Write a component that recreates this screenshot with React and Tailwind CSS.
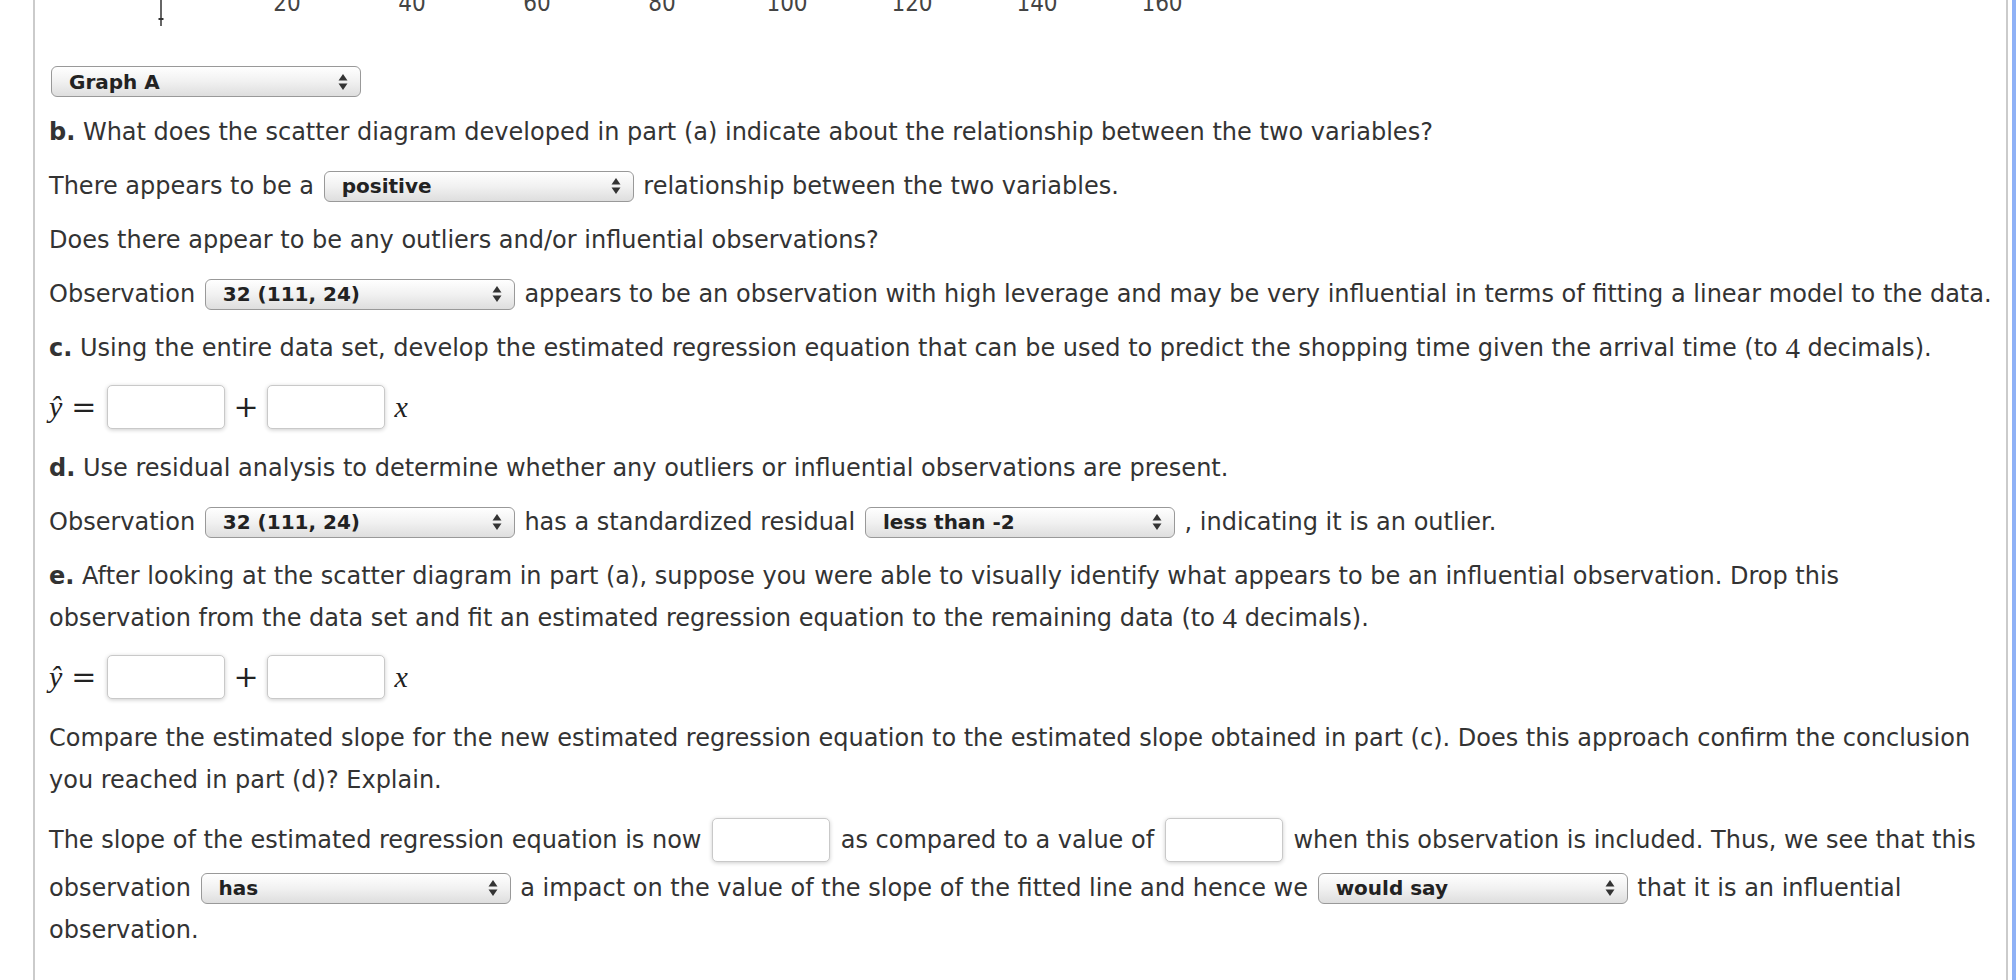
import React from "react";

const Arrows = () => (
  <svg width="10" height="18" viewBox="0 0 10 18" className="shrink-0">
    <path d="M5 1 L9.5 7.5 L0.5 7.5 Z" fill="#333" />
    <path d="M0.5 10.5 L9.5 10.5 L5 17 Z" fill="#333" />
  </svg>
);

const Select = ({ label, className = "" }) => (
  <span
    className={`inline-flex items-center justify-between w-[310px] h-[31px] mx-[2px] pl-[17px] pr-[12px] rounded-[6px] border border-[#999] bg-gradient-to-b from-white via-[#f1f1f1] to-[#dedede] text-[20px] font-bold text-[#222] leading-none ${className}`}
  >
    <span>{label}</span>
    <Arrows />
  </span>
);

const Box = ({ className = "mx-[3px]" }) => (
  <span className={`inline-block w-[118px] h-[44px] rounded-[5px] border border-[#c9c9c9] bg-white shadow-[0_1px_4px_rgba(0,0,0,0.2)] ${className}`} />
);

const Row = ({ children, tall }) => (
  <div className={`flex items-center whitespace-pre ${tall ? "h-[54px]" : "h-[42px]"}`}>
    {children}
  </div>
);

const Four = () => <span className="font-['Liberation_Serif',serif] text-[29px] leading-none">4</span>;

const Equation = () => (
  <div className="flex items-center h-[52px] mb-[2px] text-[#222]">
    <span className="font-['Liberation_Serif',serif] italic text-[30px] leading-none">ŷ</span>
    <span className="ml-[9px] font-['DejaVu_Serif',serif] font-light text-[30px] leading-none">=</span>
    <Box className="ml-[11px]" />
    <span className="ml-[8px] font-['DejaVu_Serif',serif] font-light text-[30px] leading-none">+</span>
    <Box className="ml-[8px]" />
    <span className="ml-[10px] font-['Liberation_Serif',serif] italic text-[30px] leading-none">x</span>
  </div>
);

const Axis = () => {
  const labels = [20, 40, 60, 80, 100, 120, 140, 160];
  return (
    <svg width="1300" height="50" className="block">
      <line x1="112" y1="0" x2="112" y2="26" stroke="#333" strokeWidth="1.5" />
      <line x1="109.5" y1="19" x2="114.5" y2="19" stroke="#333" strokeWidth="2" />
      {labels.map((n, i) => (
        <text
          key={n}
          x={238 + i * 125}
          y="11"
          textAnchor="middle"
          fontSize="24"
          fill="#444"
          fontFamily="DejaVu Sans Condensed, DejaVu Sans, sans-serif"
        >
          {n}
        </text>
      ))}
    </svg>
  );
};

export default function App() {
  return (
    <div className="flex w-[2016px] h-[980px] bg-white overflow-hidden font-['DejaVu_Sans','Verdana',sans-serif] text-[24px] text-[#333]">
      <div className="w-[33px] shrink-0" />
      <main className="flex-1 border-l-2 border-r-2 border-[#cbcbcb] pl-[14px]">
        <Axis />

        <div className="mt-[16px] flex">
          <Select label="Graph A" className="mx-0" />
        </div>

        <div className="mt-[14px] flex flex-col gap-[12px]">
          <Row>
            <b>b.</b> What does the scatter diagram developed in part (a) indicate about the relationship between the two variables?
          </Row>
          <Row>
            There appears to be a <Select label="positive" /> relationship between the two variables.
          </Row>
          <Row>Does there appear to be any outliers and/or influential observations?</Row>
          <Row>
            Observation <Select label="32 (111, 24)" /> appears to be an observation with high leverage and may be very influential in terms of fitting a linear model to the data.
          </Row>
          <Row>
            <b>c.</b> Using the entire data set, develop the estimated regression equation that can be used to predict the shopping time given the arrival time (to <Four /> decimals).
          </Row>
          <Equation />
          <Row>
            <b>d.</b> Use residual analysis to determine whether any outliers or influential observations are present.
          </Row>
          <Row>
            Observation <Select label="32 (111, 24)" /> has a standardized residual <Select label="less than -2" /> , indicating it is an outlier.
          </Row>
          <div>
            <Row>
              <b>e.</b> After looking at the scatter diagram in part (a), suppose you were able to visually identify what appears to be an influential observation. Drop this
            </Row>
            <Row>
              observation from the data set and fit an estimated regression equation to the remaining data (to <Four /> decimals).
            </Row>
          </div>
          <Equation />
          <div>
            <Row>
              Compare the estimated slope for the new estimated regression equation to the estimated slope obtained in part (c). Does this approach confirm the conclusion
            </Row>
            <Row>you reached in part (d)? Explain.</Row>
          </div>
          <div>
            <Row tall>
              The slope of the estimated regression equation is now <Box /> as compared to a value of <Box /> when this observation is included. Thus, we see that this
            </Row>
            <Row>
              observation <Select label="has" /> a impact on the value of the slope of the fitted line and hence we <Select label="would say" /> that it is an influential
            </Row>
            <Row>observation.</Row>
          </div>
        </div>
      </main>
      <div className="w-[4px] shrink-0" />
      <div className="w-[4px] shrink-0 bg-[#8fb1f6]" />
    </div>
  );
}
